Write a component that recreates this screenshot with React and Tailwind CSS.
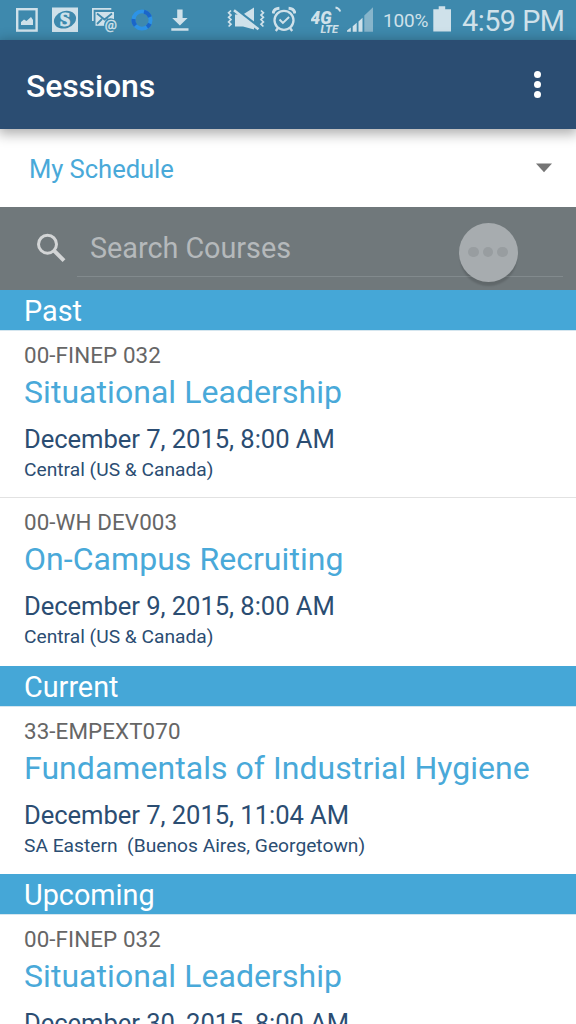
import React from 'react';

const sections = [
  {
    name: 'Past',
    sessions: [
      { code: '00-FINEP 032', title: 'Situational Leadership', date: 'December 7, 2015, 8:00 AM', zone: 'Central (US & Canada)' },
      { code: '00-WH DEV003', title: 'On-Campus Recruiting', date: 'December 9, 2015, 8:00 AM', zone: 'Central (US & Canada)' },
    ],
  },
  {
    name: 'Current',
    sessions: [
      { code: '33-EMPEXT070', title: 'Fundamentals of Industrial Hygiene', date: 'December 7, 2015, 11:04 AM', zone: 'SA Eastern  (Buenos Aires, Georgetown)' },
    ],
  },
  {
    name: 'Upcoming',
    sessions: [
      { code: '00-FINEP 032', title: 'Situational Leadership', date: 'December 30, 2015, 8:00 AM', zone: 'Central (US & Canada)' },
    ],
  },
];

function StatusBar() {
  return (
    <div className="flex h-10 shrink-0 items-center bg-[#3e89ad] pl-4 text-[#cfe1ea]">
      {/* Notifications */}
      <svg className="h-10 w-[22px]" viewBox="0 0 22 40" fill="none">
        <rect x="1.2" y="9.2" width="19.4" height="21.4" stroke="currentColor" strokeWidth="2.4" />
        <path d="M5 25v-3l3-2.5 2.5 1.5 4.5-4 2 3v5z" fill="currentColor" />
      </svg>
      <svg className="ml-3.5 h-10 w-[26px]" viewBox="0 0 26 40">
        <rect x="0" y="7.5" width="26" height="24.5" fill="currentColor" />
        <ellipse cx="13" cy="19.7" rx="11.3" ry="8.6" transform="rotate(-18 13 19.7)" fill="#3e89ad" />
        <text x="13" y="26.2" textAnchor="middle" fontFamily="Liberation Serif, serif" fontWeight="700" fontSize="19" fill="currentColor" stroke="currentColor" strokeWidth="0.9">S</text>
      </svg>
      <svg className="ml-3.5 h-10 w-[26px]" viewBox="0 0 26 40" fill="none">
        <path d="M0.8 21V8.8h18.5" stroke="currentColor" strokeWidth="1.7" />
        <rect x="3.5" y="12" width="18.5" height="13.8" fill="currentColor" />
        <path d="M5 13.5l7.5 6 7.5-6M5 24l5-5M15 19l4 4" stroke="#3e89ad" strokeWidth="1.8" />
        <circle cx="18.6" cy="24.8" r="6.6" fill="#3e89ad" />
        <text x="18.8" y="28.9" textAnchor="middle" fontFamily="Roboto, sans-serif" fontSize="13.5" fill="currentColor" stroke="currentColor" strokeWidth="0.4">@</text>
      </svg>
      <svg className="ml-[13px] h-10 w-[22px]" viewBox="0 0 22 40" fill="none">
        <circle cx="11" cy="20" r="8.6" stroke="#2d93e6" strokeWidth="3.9" />
        <path d="M13 11.7A8.6 8.6 0 0 1 19 17M18.8 23.6A8.6 8.6 0 0 1 16 27M4.5 25.6A8.6 8.6 0 0 1 2.5 19" stroke="#1b66c9" strokeWidth="3.9" />
      </svg>
      <svg className="ml-[18px] h-10 w-[18px]" viewBox="0 0 18 40" fill="currentColor">
        <path d="M6.2 9.5h5.4v8.5h5L8.9 25.5 1.2 18h5zM0.3 28.3h17.2v2.5H.3z" />
      </svg>

      {/* System indicators */}
      <svg className="ml-[38px] h-10 w-[38px]" viewBox="0 0 38 40" fill="none" stroke="currentColor">
        <path d="M4 10.5l-2.4 2.3L4 15l-2.4 2.3L4 19.6l-2.4 2.3L4 24.2l-2.4 2.3M34 10.5l2.4 2.3L34 15l2.4 2.3-2.4 2.3 2.4 2.3-2.4 2.3 2.4 2.3" strokeWidth="1.7" />
        <path d="M8 14.5h8l11-7v22l-11-3H8z" fill="currentColor" stroke="none" />
        <path d="M6.5 7.6l26 20" stroke="#3e89ad" strokeWidth="3" />
        <path d="M7 10.3l24.5 19" strokeWidth="2.6" />
      </svg>
      <svg className="ml-[7px] h-10 w-6" viewBox="0 0 24 40" fill="none" stroke="currentColor">
        <circle cx="12" cy="20.3" r="9.5" strokeWidth="2.3" />
        <path d="M7.5 19.5l3.4 3.4 6.2-5.8" strokeWidth="2" />
        <path d="M1 13.4C1.5 10.5 4 8.5 7.4 8.3M23 13.4C22.5 10.5 20 8.5 16.6 8.3" strokeWidth="3" />
        <path d="M6 28l-2.2 3M18 28l2.2 3" strokeWidth="2.3" />
      </svg>
      <svg className="ml-[15px] h-10 w-8" viewBox="0 0 32 40" fill="currentColor">
        <text x="-0.5" y="24" fontFamily="Roboto, sans-serif" fontWeight="900" fontStyle="italic" fontSize="17.5" textLength="21" lengthAdjust="spacingAndGlyphs">4G</text>
        <text x="9.5" y="32.8" fontFamily="Roboto, sans-serif" fontWeight="800" fontStyle="italic" fontSize="11" textLength="17.5" lengthAdjust="spacingAndGlyphs">LTE</text>
        <path d="M24.5 7.5q3.4.6 4.8 4" stroke="currentColor" strokeWidth="1.8" fill="none" />
      </svg>
      <svg className="ml-1 h-10 w-[27px]" viewBox="0 0 27 40" fill="currentColor">
        <path d="M0 31.8v-1.3l3.8-3v4.3zM5.7 31.8v-5.6l4-3.4v9zM11.5 31.8V21.4l4-3.6v14z" />
        <path d="M17.3 31.8V15.4L26 7.2v24.6z" opacity="0.5" />
      </svg>
      <span className="ml-[9px] w-[50px] pt-px text-[19px] leading-10 tracking-[-0.2px]">100%</span>
      <svg className="h-10 w-[18px]" viewBox="0 0 18 40" fill="currentColor">
        <path d="M5.7 6.3h6.5v3H18v22.3H.3V9.3h5.4z" />
      </svg>
      <span className="ml-[11px] pt-0.5 text-[28.8px] leading-10 tracking-[-0.5px] whitespace-nowrap">4:59 PM</span>
    </div>
  );
}

function AppBar() {
  return (
    <div className="relative z-10 flex h-[89px] shrink-0 items-center justify-between bg-[#2b4d72] pr-[35px] pl-[26px] shadow-[0_3px_12px_2px_rgba(0,0,0,0.32)]">
      <h1 className="pt-0.5 text-[32px] leading-10 font-medium tracking-[-0.12px] text-white">Sessions</h1>
      <button className="flex flex-col gap-[2.6px]" aria-label="More options">
        <span className="size-[7px] rounded-full bg-white" />
        <span className="size-[7px] rounded-full bg-white" />
        <span className="size-[7px] rounded-full bg-white" />
      </button>
    </div>
  );
}

function SearchBar() {
  return (
    <div className="relative flex h-[83px] shrink-0 bg-[#70787b] pr-[13px] pl-9">
      <svg className="mt-[26px] h-[30px] w-[30px] shrink-0" viewBox="0 0 30 30" fill="none" stroke="#d3d5d6">
        <circle cx="11.5" cy="11.2" r="9" strokeWidth="3" />
        <path d="M18 17.6l10 10" strokeWidth="4" />
      </svg>
      <div className="ml-[11px] h-[70px] flex-1 border-b border-[#828a8d] pl-[13px]">
        <span className="text-[28.8px] leading-[83px] tracking-[-0.03px] text-[#b5b9bb]">Search Courses</span>
      </div>
      {/* Floating assistant bubble */}
      <div className="absolute top-4 left-[458.5px] flex size-[59px] items-center justify-center gap-1 rounded-full bg-[#a7acaf] shadow-[0_5px_2px_-1px_rgba(0,0,0,0.14)]">
        <span className="size-[10.5px] rounded-full bg-[#989da0]" />
        <span className="size-[10.5px] rounded-full bg-[#989da0]" />
        <span className="size-[10.5px] rounded-full bg-[#989da0]" />
      </div>
    </div>
  );
}

function Session({ session }) {
  return (
    <li className="h-[167.6px] border-b border-[#e2e2e2] pt-[11px] pl-6 whitespace-pre last:border-b-0">
      <p className="text-[22.4px] leading-[26px] tracking-[0.08px] text-[#666666]">{session.code}</p>
      <p className="mt-0.5 text-[32px] leading-[44px] tracking-[0.05px] text-[#49a9d9]">{session.title}</p>
      <p className="mt-[9px] text-[25.6px] leading-8 tracking-[-0.06px] text-[#2b4d72]">{session.date}</p>
      <p className="text-[19.2px] leading-[30px] tracking-[0.01px] text-[#2b4d72]">{session.zone}</p>
    </li>
  );
}

export default function App() {
  return (
    <div className="flex h-[1024px] w-[576px] flex-col overflow-hidden bg-white font-[Roboto,sans-serif]">
      <StatusBar />
      <AppBar />
      <div className="flex h-[77.5px] shrink-0 items-center justify-between pr-[24.5px] pl-[29px]">
        <span className="pt-[3px] text-[25.6px] leading-8 tracking-[-0.06px] text-[#49a9d9]">My Schedule</span>
        <svg className="h-2.5 w-4" viewBox="0 0 16 10" fill="#757575">
          <path d="M0 .5h16L8 9.3z" />
        </svg>
      </div>
      <SearchBar />
      {sections.map((section) => (
        <section key={section.name} className="shrink-0">
          <h2 className="h-[41px] border-b border-[#d5e6ef] bg-[#45a7d7] pl-6 text-[28.8px] leading-[43px] text-white">{section.name}</h2>
          <ul>
            {section.sessions.map((session) => (
              <Session key={session.title} session={session} />
            ))}
          </ul>
        </section>
      ))}
    </div>
  );
}
